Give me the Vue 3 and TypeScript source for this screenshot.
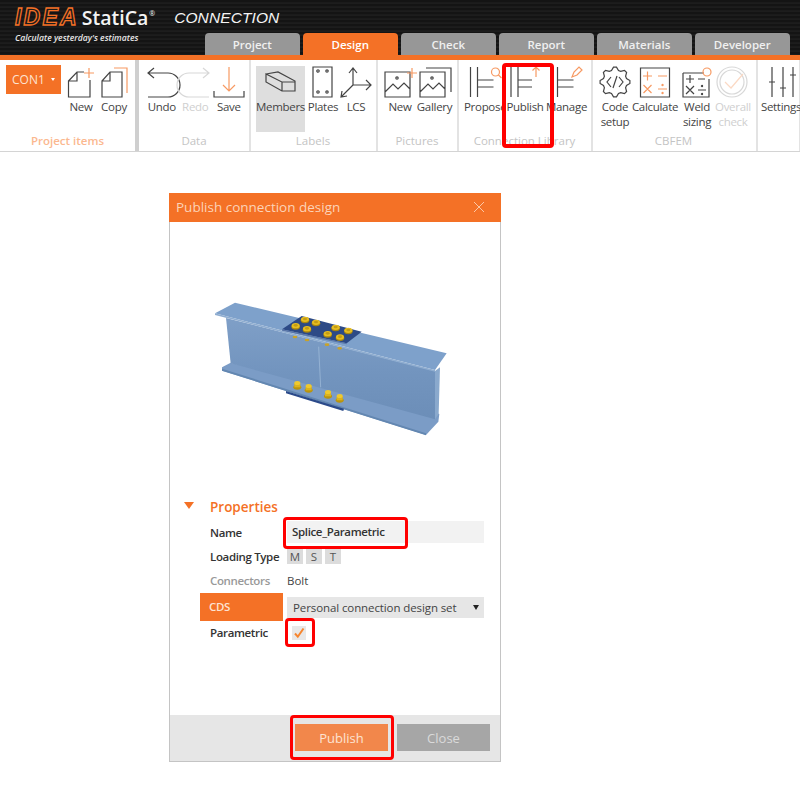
<template>
  <div class="app">
    <header class="titlebar">
      <div class="brand">
        <div class="brand-top">
          <span class="logo-idea">IDEA</span>
          <span class="logo-statica">StatiCa<sup>®</sup></span>
          <span class="logo-module">CONNECTION</span>
        </div>
        <div class="brand-slogan">Calculate yesterday's estimates</div>
      </div>
      <nav class="tabs">
        <div
          v-for="tab in tabs"
          :key="tab"
          class="tab"
          :class="{ 'tab--active': tab === 'Design' }"
        >
          {{ tab }}
        </div>
      </nav>
    </header>

    <section class="ribbon">
      <div
        v-for="group in groups"
        :key="group.title"
        class="group"
        :class="{ 'group--thick': group.title === 'Project items' }"
        :style="{ width: group.width + 'px', paddingLeft: group.pad + 'px' }"
      >
        <div class="group-items">
          <div v-if="group.title === 'Project items'" class="con-select">
            <span>CON1</span>
            <i class="con-arrow" />
          </div>
          <div
            v-for="item in group.items"
            :key="item.label"
            class="tool"
            :class="{
              'tool--off': item.off,
              'tool--on': item.label === 'Members',
              'tool--clip': item.label === 'Propose',
            }"
            :style="{ width: item.w + 'px' }"
          >
            <svg class="tool-icon" viewBox="0 0 34 34" width="34" height="34">
              <path class="ink" :d="item.dark" />
              <path class="accent" :d="item.accent" />
            </svg>
            <div class="tool-label">{{ item.label }}</div>
          </div>
        </div>
        <div class="group-title" :class="{ 'group-title--main': group.title === 'Project items' }">
          {{ group.title }}
        </div>
      </div>
      <div class="mark mark--ribbon" />
    </section>

    <main class="workspace">
      <div class="dialog">
        <div class="dialog-head">
          <span>Publish connection design</span>
          <svg viewBox="0 0 12 12" width="12" height="12"><path d="M1 1l10 10M11 1L1 11" /></svg>
        </div>

        <div class="preview">
          <svg viewBox="0 0 840 480" width="280" height="160" class="beam">
            <defs>
              <linearGradient id="webFill" x1="0" y1="0" x2="0" y2="1">
                <stop offset="0" stop-color="#7f9fc7" />
                <stop offset="0.5" stop-color="#7395bf" />
                <stop offset="1" stop-color="#6c8eb8" />
              </linearGradient>
            </defs>
            <polygon points="96,232 122,218 748,372 745,395 708,435 96,242" fill="#7b9cc6" />
            <polygon points="96,236 708,430 708,436 96,242" fill="#6387b1" />
            <polygon points="108,84 735,243 735,388 122,220" fill="url(#webFill)" />
            <polygon points="735,243 750,232 746,372 735,388" fill="#8aa9cd" />
            <polygon points="288,303 462,356 460,363 288,310" fill="#2b4a8a" />
            <polygon points="75,70 135,38 770,190 735,240" fill="#7ea1cb" />
            <polygon points="75,70 735,240 735,245 75,75" fill="#8fadd0" />
            <line x1="386" y1="170" x2="392" y2="292" stroke="#a5c0dc" stroke-width="2" />
            <polygon points="276,118 335,78 515,125 470,160" fill="#2d4a86" />
            <polygon points="276,118 470,160 470,163 276,122" fill="#5a76a8" />
            <g v-for="n in underNuts" :key="n.x">
              <ellipse :cx="n.x" :cy="n.y" rx="7" ry="4" fill="#c9a227" />
            </g>
            <g v-for="b in bolts" :key="b.x">
              <ellipse :cx="b.x" :cy="b.y + 3" rx="13" ry="9" fill="#a8860f" />
              <ellipse :cx="b.x" :cy="b.y" rx="12" ry="8" fill="#e6bd21" />
              <ellipse :cx="b.x" :cy="b.y - 1" rx="6" ry="4" fill="#c49c15" />
            </g>
            <g v-for="b in lowerBolts" :key="b.x">
              <ellipse :cx="b.x" :cy="b.y + 8" rx="12" ry="7" fill="#b8930f" />
              <rect :x="b.x - 9" :y="b.y - 5" width="18" height="13" fill="#dcb31c" />
              <ellipse :cx="b.x" :cy="b.y - 5" rx="9" ry="6" fill="#efc92e" />
            </g>
          </svg>
        </div>

        <div class="props">
          <div class="props-head">
            <i class="props-caret" />
            <span>Properties</span>
          </div>
          <div class="row row--name">
            <label>Name</label>
            <div class="field">Splice_Parametric</div>
          </div>
          <div class="row row--load">
            <label>Loading Type</label>
            <div class="chips">
              <span v-for="c in ['M', 'S', 'T']" :key="c" class="chip">{{ c }}</span>
            </div>
          </div>
          <div class="row row--conn">
            <label>Connectors</label>
            <div class="plain">Bolt</div>
          </div>
          <div class="row row--cds">
            <label>CDS</label>
            <div class="select">
              <span>Personal connection design set</span>
              <i class="select-arrow" />
            </div>
          </div>
          <div class="row row--param">
            <label>Parametric</label>
            <div class="check">
              <svg viewBox="0 0 14 14" width="14" height="14"><path d="M3 7.5l2.8 3.2L11.5 2.5" /></svg>
            </div>
          </div>
          <div class="mark mark--name" />
          <div class="mark mark--check" />
        </div>

        <div class="dialog-foot">
          <div class="btn btn--primary">
            Publish
            <div class="mark mark--publish" />
          </div>
          <div class="btn btn--close">Close</div>
        </div>
      </div>
    </main>
  </div>
</template>

<script setup lang="ts">
interface Tool {
  label: string
  w: number
  dark: string
  accent: string
  off?: boolean
}

interface Group {
  title: string
  width: number
  pad: number
  items: Tool[]
}

const tabs = ['Project', 'Design', 'Check', 'Report', 'Materials', 'Developer']

function circle(cx: number, cy: number, r: number): string {
  return `M${cx - r} ${cy}a${r} ${r} 0 1 0 ${r * 2} 0a${r} ${r} 0 1 0 ${-r * 2} 0`
}

function gear(cx: number, cy: number, outer: number, inner: number, teeth: number): string {
  const pts: string[] = []
  const steps = teeth * 4
  for (let i = 0; i < steps; i++) {
    const r = i % 4 < 2 ? outer : inner
    const a = ((i - 0.5) / steps) * Math.PI * 2
    pts.push(`${(cx + r * Math.cos(a)).toFixed(1)} ${(cy + r * Math.sin(a)).toFixed(1)}`)
  }
  return `M${pts.join('L')}Z`
}

const picture = 'M2 7H27V32H2ZM2 27L10 19L15 24L21 18L27 24' + circle(14, 13, 1.2)

const groups: Group[] = [
  {
    title: 'Project items',
    width: 139,
    pad: 6,
    items: [
      {
        label: 'New',
        w: 33,
        dark: 'M4.5 16L13 7H20M26 15V32H4.5V16H13V7',
        accent: 'M25 3V13M20 8H30',
      },
      {
        label: 'Copy',
        w: 33,
        dark: 'M5 16L13 7H25V32H5V16H13V7',
        accent: 'M17 3H30V28',
      },
    ],
  },
  {
    title: 'Data',
    width: 112,
    pad: 6,
    items: [
      {
        label: 'Undo',
        w: 33.5,
        dark: 'M3 8H23a12 12 0 0 1 0 24H3M9 3L3 8L9 13',
        accent: '',
      },
      {
        label: 'Redo',
        w: 33.5,
        off: true,
        dark: 'M31 8H11a12 12 0 0 0 0 24H31M25 3L31 8L25 13',
        accent: '',
      },
      {
        label: 'Save',
        w: 33.5,
        dark: 'M2 26V32H32V26',
        accent: 'M17 2V26M11 20L17 26L23 20',
      },
    ],
  },
  {
    title: 'Labels',
    width: 127,
    pad: 5,
    items: [
      {
        label: 'Members',
        w: 49,
        dark: 'M2 9L14 7L31 16V26H18L2 17V9L18 17V26M18 17H31',
        accent: '',
      },
      {
        label: 'Plates',
        w: 36,
        dark:
          'M7 2H26V32H7Z' +
          circle(12, 6, 1.2) +
          circle(21, 6, 1.2) +
          circle(12, 27, 1.2) +
          circle(21, 27, 1.2),
        accent: '',
      },
      {
        label: 'LCS',
        w: 30,
        dark: 'M14 20V3M10 8L14 3L18 8M14 20H32M27 15L32 20L27 25M14 20L2 32M3 26L2 32L8 31',
        accent: '',
      },
    ],
  },
  {
    title: 'Pictures',
    width: 81,
    pad: 5,
    items: [
      { label: 'New', w: 34, dark: picture, accent: 'M29 3V13M24 8H34' },
      { label: 'Gallery', w: 35, dark: picture + 'M8 3H33V27', accent: '' },
    ],
  },
  {
    title: 'Connection Library',
    width: 134,
    pad: 5,
    items: [
      {
        label: 'Propose',
        w: 39,
        dark: 'M3.5 2V32M10.5 2V32M10.5 15H26.5M10.5 22H26.5',
        accent: circle(28.5, 7, 4) + 'M31.5 10L34.5 13',
      },
      {
        label: 'Publish',
        w: 44,
        dark: 'M3 2V32M10 2V32M10 15H24M10 22H24',
        accent: 'M28 12V2M24.5 5.5L28 2L31.5 5.5',
      },
      {
        label: 'Manage',
        w: 39,
        dark: 'M7.5 2V32M7.5 15H23.5M7.5 22H23.5',
        accent: 'M22 12L24 7L29 2L32 5L27 10Z',
      },
    ],
  },
  {
    title: 'CBFEM',
    width: 165,
    pad: 4,
    items: [
      {
        label: 'Code setup',
        w: 36,
        dark: gear(17, 17, 15, 12, 8) + 'M13 12L9 17L13 22M21 12L25 17L21 22M19 11L15 23',
        accent: '',
      },
      {
        label: 'Calculate',
        w: 44,
        dark: 'M2.5 3H31.5V32H2.5Z',
        accent:
          'M5 11H14M9.5 6.5V15.5M20 11H29M5.5 20L13.5 28M13.5 20L5.5 28M20 24H29' +
          circle(24.5, 20, 0.6) +
          circle(24.5, 28, 0.6),
      },
      {
        label: 'Weld sizing',
        w: 40,
        dark:
          'M3 8H24M29 14V32H3V8M6 14H14M10 10V18M18 14H25M6 21L14 29M14 21L6 29M18 25H26' +
          circle(22, 21, 0.6) +
          circle(22, 29, 0.6),
        accent: circle(27, 7, 4),
      },
      {
        label: 'Overall check',
        w: 32,
        off: true,
        dark: circle(16, 17, 15) + circle(16, 17, 12),
        accent: 'M9 17L15 23L27 9',
      },
    ],
  },
  {
    title: '',
    width: 43,
    pad: 0,
    items: [
      {
        label: 'Settings',
        w: 46,
        dark: 'M8 2V32M19 2V32M29 2V32M5 17H11M16 23H22M26 10H32',
        accent: '',
      },
    ],
  },
]

const bolts = [
  { x: 345, y: 88 },
  { x: 378, y: 97 },
  { x: 317, y: 107 },
  { x: 351, y: 116 },
  { x: 437, y: 112 },
  { x: 475, y: 121 },
  { x: 413, y: 131 },
  { x: 450, y: 141 },
]

const underNuts = [
  { x: 315, y: 141 },
  { x: 351, y: 150 },
  { x: 411, y: 164 },
  { x: 449, y: 175 },
]

const lowerBolts = [
  { x: 322, y: 284 },
  { x: 356, y: 293 },
  { x: 414, y: 311 },
  { x: 449, y: 323 },
]
</script>

<style>
html,
body {
  margin: 0;
  background: #fff;
}
</style>

<style scoped>
.app {
  position: relative;
  width: 800px;
  height: 786px;
  overflow: hidden;
  background: #fff;
  font-family: "Open Sans", "Noto Sans", sans-serif;
  font-size: 11.5px;
  color: #444;
}

.titlebar {
  display: flex;
  height: 55px;
  background: repeating-linear-gradient(180deg, #141414 0, #141414 2px, #222 3px, #181818 4px);
}

.brand {
  width: 205px;
  flex: none;
  padding: 7px 0 0 15px;
  box-sizing: border-box;
}

.brand-top {
  display: flex;
  align-items: center;
  height: 21px;
  width: 300px;
}

.logo-idea {
  font: italic 700 23px "Liberation Sans", sans-serif;
  letter-spacing: 2.2px;
  color: #1b1b1b;
  -webkit-text-stroke: 1.3px #f47126;
}

.logo-statica {
  margin-left: 3px;
  font: 600 19.5px "Open Sans", sans-serif;
  color: #f4f4f4;
}

.logo-statica sup {
  font-size: 7px;
  font-weight: 400;
  vertical-align: 9px;
  line-height: 0;
  margin-left: 1px;
}

.logo-module {
  margin-left: 19px;
  font: italic 400 15.5px "Liberation Sans", sans-serif;
  color: #f4f4f4;
  letter-spacing: 0.1px;
}

.brand-slogan {
  margin-top: 4px;
  white-space: nowrap;
  font: italic 600 8.6px "Open Sans", sans-serif;
  color: #e8e8e8;
}

.tabs {
  display: flex;
  align-items: flex-end;
  gap: 3.5px;
}

.tab {
  width: 94.5px;
  height: 22px;
  box-sizing: border-box;
  border-radius: 4px 4px 0 0;
  background: #979797;
  color: #f0f0f0;
  font-size: 11.5px;
  font-weight: 600;
  line-height: 23px;
  text-align: center;
}

.tab--active {
  background: #f47126;
  color: #fff;
}

.ribbon {
  display: flex;
  height: 97px;
  box-sizing: border-box;
  border-top: 5px solid #f47126;
  border-bottom: 1px solid #d4d4d4;
}

.group {
  flex: none;
  display: flex;
  flex-direction: column;
  box-sizing: border-box;
  height: 91px;
  border-right: 2px solid #e3e3e3;
}

.group--thick {
  border-right: 4px solid #cfcfcf;
}

.group:last-of-type {
  border-right: 0;
}

.group-items {
  display: flex;
  height: 67px;
  padding-top: 5px;
}

.group-title {
  margin-left: -6px;
  text-align: center;
  height: 14px;
  line-height: 14px;
  margin-top: 2px;
  color: #c4c4c4;
  font-size: 11.5px;
  white-space: nowrap;
}

.group-title--main {
  color: #fbb88f;
  font-weight: 600;
}

.con-select {
  width: 55px;
  height: 29px;
  margin-right: 3.5px;
  padding: 0 6px;
  box-sizing: border-box;
  display: flex;
  align-items: center;
  justify-content: space-between;
  background: #f47126;
  color: #fde3d2;
  font-size: 12px;
}

.con-arrow {
  border-left: 2.5px solid transparent;
  border-right: 2.5px solid transparent;
  border-top: 3px solid #fff;
}

.tool {
  flex: none;
  display: flex;
  flex-direction: column;
  align-items: center;
  text-align: center;
}

.tool-icon {
  flex: none;
  overflow: visible;
}

.tool-icon path {
  fill: none;
  stroke-width: 1.2;
}

.ink {
  stroke: #444;
}

.accent {
  stroke: #f79a63;
}

.tool-label {
  line-height: 15px;
  letter-spacing: -0.3px;
  position: relative;
}

.tool--on {
  background: #dedede;
  height: 66px;
  margin-top: 1px;
}

.tool--on .tool-icon {
  margin-top: -1px;
}

.tool--off .ink {
  stroke: #d8d8d8;
}

.tool--off .accent {
  stroke: #fbd9c4;
}

.tool--off .tool-label {
  color: #cfcfcf;
}

.tool--clip {
  overflow: hidden;
  align-items: flex-start;
}

.tool--clip .tool-icon {
  margin-left: 2.5px;
}

.mark {
  position: absolute;
  box-sizing: border-box;
  border: 3px solid #f00;
  border-radius: 4px;
  pointer-events: none;
}

.mark--ribbon {
  left: 502px;
  top: 63px;
  width: 52px;
  height: 85px;
  border-width: 4px;
}

.workspace {
  padding: 41px 0 0 169px;
}

.dialog {
  display: flex;
  flex-direction: column;
  width: 332px;
  height: 569px;
  box-sizing: border-box;
  background: #fff;
  border: 1px solid #c4c4c4;
  border-top: 0;
}

.dialog-head {
  flex: none;
  height: 29px;
  margin: 0 -1px;
  padding: 0 16px 2px 7px;
  box-sizing: border-box;
  display: flex;
  align-items: center;
  justify-content: space-between;
  background: #f47126;
  color: #fcd3b8;
  font-size: 13.5px;
}

.dialog-head path {
  stroke: #fbc7a6;
  stroke-width: 1;
  fill: none;
}

.preview {
  height: 273px;
  padding: 68px 0 0 20px;
  box-sizing: border-box;
}

.beam {
  display: block;
  filter: blur(0.4px);
}

.props {
  position: relative;
  padding-left: 30px;
}

.props-head {
  position: relative;
  height: 26px;
  padding-top: 3px;
  box-sizing: border-box;
  display: flex;
  align-items: flex-start;
  padding-left: 10px;
  color: #f47126;
  font-size: 13.5px;
  font-weight: 600;
}

.props-caret {
  position: absolute;
  left: -16px;
  top: 7px;
  border-left: 5px solid transparent;
  border-right: 5px solid transparent;
  border-top: 7px solid #f47126;
}

.row {
  display: grid;
  grid-template-columns: 83px 197px;
  column-gap: 4px;
  align-items: center;
}

.row label {
  padding-left: 10px;
  font-size: 11.5px;
  font-weight: 600;
  color: #333;
  white-space: nowrap;
  letter-spacing: -0.35px;
}

.row--name {
  height: 22px;
}

.field {
  height: 22px;
  padding-left: 5px;
  background: #f2f2f2;
  font-weight: 600;
  line-height: 22px;
  color: #333;
  letter-spacing: -0.35px;
}

.row--load {
  height: 20px;
  margin-top: 3px;
}

.chips {
  display: flex;
  gap: 3px;
}

.chip {
  width: 16px;
  height: 15px;
  background: #dcdcdc;
  line-height: 15px;
  text-align: center;
  color: #555;
}

.row--conn {
  height: 20px;
  margin-top: 4px;
}

.row--conn label {
  color: #999;
}

.plain {
  color: #444;
}

.row--cds {
  height: 28px;
  margin-top: 3px;
}

.row--cds label {
  height: 28px;
  line-height: 28px;
  padding-left: 9px;
  background: #f47126;
  color: #fde3d2;
}

.select {
  height: 21px;
  padding: 0 5px 0 6px;
  display: flex;
  align-items: center;
  justify-content: space-between;
  background: #e6e6e6;
  letter-spacing: -0.1px;
}

.select-arrow {
  border-left: 3px solid transparent;
  border-right: 3px solid transparent;
  border-top: 5px solid #222;
}

.row--param {
  height: 20px;
  margin-top: 2px;
}

.row--param label {
  margin-top: -2px;
}

.check {
  width: 14px;
  height: 14px;
  margin-left: 5px;
  background: #e8e8e8;
}

.check svg {
  display: block;
}

.check path {
  fill: none;
  stroke: #f7862f;
  stroke-width: 2;
}

.mark--name {
  left: 113px;
  top: 22px;
  width: 125px;
  height: 32px;
}

.mark--check {
  left: 115px;
  top: 123px;
  width: 30px;
  height: 29px;
}

.dialog-foot {
  margin-top: auto;
  height: 46px;
  padding: 9px 10px 0 0;
  box-sizing: border-box;
  display: flex;
  justify-content: flex-end;
  gap: 9px;
  background: #e6e6e6;
}

.btn {
  position: relative;
  width: 93px;
  height: 27px;
  line-height: 29px;
  text-align: center;
  font-size: 13px;
}

.btn--primary {
  background: #f2874b;
  color: #fde3d2;
}

.btn--close {
  background: #a6a6a6;
  color: #dadada;
}

.mark--publish {
  left: -5px;
  top: -9px;
  width: 104px;
  height: 45px;
}
</style>
